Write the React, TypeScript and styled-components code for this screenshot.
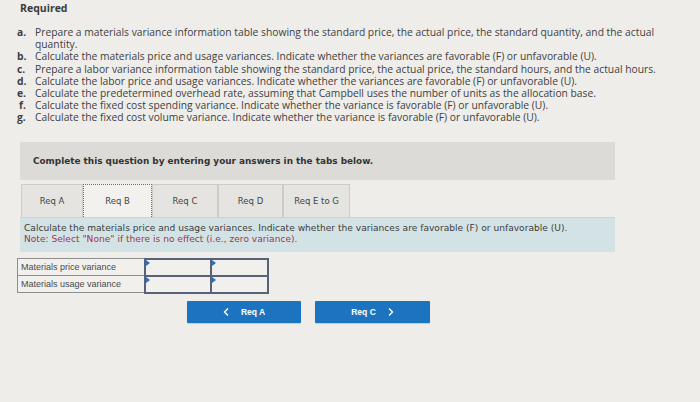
import React from 'react';
import styled, { createGlobalStyle } from 'styled-components';

const GlobalStyle = createGlobalStyle`
  html, body {
    margin: 0;
    padding: 0;
    background: #eeedea;
  }
  * {
    box-sizing: border-box;
  }
`;

const Page = styled.div`
  width: 700px;
  height: 402px;
  padding: 2px 0 0 17px;
  background: #eeedea;
  overflow: hidden;
`;

const Heading = styled.h4`
  margin: 0 0 0 3px;
  font-family: 'Open Sans', 'Liberation Sans', sans-serif;
  font-weight: 700;
  font-size: 10.5px;
  line-height: 13px;
  color: #3b3b3b;
`;

const ReqList = styled.ol`
  list-style: none;
  margin: 11px 0 0 0;
  padding: 0;
  width: 665px;
  font-family: 'Open Sans', 'Liberation Sans', sans-serif;
  font-size: 10.3px;
  line-height: 12.2px;
  color: #3f3f3f;
`;

const ReqItem = styled.li`
  display: grid;
  grid-template-columns: 18px 1fr;
`;

const Marker = styled.span<{ indent?: number }>`
  font-weight: 700;
  padding-left: ${(p) => p.indent ?? 0}px;
`;

const Banner = styled.div`
  margin: 18px 0 0 3px;
  width: 595px;
  height: 38px;
  background: #dcdbd7;
  display: flex;
  align-items: center;
  padding-left: 13px;
  font-family: 'DejaVu Sans', Verdana, sans-serif;
  font-weight: 700;
  font-size: 8.9px;
  color: #333;
`;

const TabRow = styled.div`
  display: flex;
  margin: 4px 0 0 4px;
`;

const Tab = styled.div<{ w: number; active?: boolean }>`
  width: ${(p) => p.w}px;
  height: 33px;
  display: flex;
  align-items: center;
  justify-content: center;
  background: ${(p) => (p.active ? '#f2f1ee' : '#e5e4e1')};
  border: ${(p) => (p.active ? '1px dotted #6d6d6d' : '1px solid #cdccc8')};
  border-bottom: none;
  font-family: 'DejaVu Sans', Verdana, sans-serif;
  font-size: 8.5px;
  color: #444;
`;

const Instructions = styled.div`
  margin-left: 3px;
  width: 595px;
  height: 35px;
  background: #d3e3e5;
  border-top: 1px solid #c4d4d7;
  padding: 5px 0 0 4px;
  font-family: 'DejaVu Sans', Verdana, sans-serif;
  font-size: 9.1px;
  line-height: 11px;
  color: #3c3c3c;
`;

const Note = styled.div`
  color: #a2354a;
`;

const AnswerTable = styled.table`
  margin-top: 6px;
  border-collapse: collapse;
  font-family: 'Liberation Sans', Arial, sans-serif;
  font-size: 9px;
  color: #4a4a4a;
`;

const LabelCell = styled.td`
  width: 127px;
  height: 17px;
  padding: 0 0 0 3px;
  border: 1px solid #8e8e8e;
  background: #f1f0ed;
`;

const InputCell = styled.td<{ w: number }>`
  position: relative;
  width: ${(p) => p.w}px;
  height: 17px;
  padding: 0;
  border: 2px solid #57617a;
  background: #f1f0ed;

  &::before {
    content: '';
    position: absolute;
    left: 0;
    top: 0;
    border-top: 3px solid transparent;
    border-bottom: 3px solid transparent;
    border-left: 4px solid #2f6fb5;
  }
`;

const NavRow = styled.div`
  display: flex;
  gap: 14px;
  margin: 7px 0 0 170px;
`;

const NavButton = styled.button<{ w: number }>`
  width: ${(p) => p.w}px;
  height: 22px;
  border: none;
  border-radius: 1px;
  background: #1c73c0;
  color: #fff;
  display: flex;
  align-items: center;
  justify-content: center;
  gap: 12px;
  font-family: 'Liberation Sans', Arial, sans-serif;
  font-weight: 700;
  font-size: 8.5px;
  padding: 0;
  box-shadow: 0 1px 1px rgba(0, 0, 0, 0.15);
`;

const Chevron = styled.svg`
  width: 6px;
  height: 8px;
`;

const requirements = [
  ['a.', 'Prepare a materials variance information table showing the standard price, the actual price, the standard quantity, and the actual quantity.'],
  ['b.', 'Calculate the materials price and usage variances. Indicate whether the variances are favorable (F) or unfavorable (U).'],
  ['c.', 'Prepare a labor variance information table showing the standard price, the actual price, the standard hours, and the actual hours.'],
  ['d.', 'Calculate the labor price and usage variances. Indicate whether the variances are favorable (F) or unfavorable (U).'],
  ['e.', 'Calculate the predetermined overhead rate, assuming that Campbell uses the number of units as the allocation base.'],
  ['f.', 'Calculate the fixed cost spending variance. Indicate whether the variance is favorable (F) or unfavorable (U).'],
  ['g.', 'Calculate the fixed cost volume variance. Indicate whether the variance is favorable (F) or unfavorable (U).'],
];

const tabs = [
  { label: 'Req A', w: 62 },
  { label: 'Req B', w: 69, active: true },
  { label: 'Req C', w: 66 },
  { label: 'Req D', w: 65 },
  { label: 'Req E to G', w: 67 },
];

const rows = ['Materials price variance', 'Materials usage variance'];

const App: React.FC = () => {
  return (
    <Page>
      <GlobalStyle />
      <Heading>Required</Heading>
      <ReqList>
        {requirements.map(([m, text]) => (
          <ReqItem key={m}>
            <Marker indent={m === 'f.' ? 2 : 0}>{m}</Marker>
            <span>{text}</span>
          </ReqItem>
        ))}
      </ReqList>

      <Banner>Complete this question by entering your answers in the tabs below.</Banner>

      <TabRow>
        {tabs.map((t) => (
          <Tab key={t.label} w={t.w} active={t.active}>
            {t.label}
          </Tab>
        ))}
      </TabRow>

      <Instructions>
        <div>
          Calculate the materials price and usage variances. Indicate whether the variances are favorable (F) or
          unfavorable (U).
        </div>
        <Note>Note: Select "None" if there is no effect (i.e., zero variance).</Note>
      </Instructions>

      <AnswerTable>
        <tbody>
          {rows.map((r) => (
            <tr key={r}>
              <LabelCell>{r}</LabelCell>
              <InputCell w={66} />
              <InputCell w={57} />
            </tr>
          ))}
        </tbody>
      </AnswerTable>

      <NavRow>
        <NavButton w={114}>
          <Chevron viewBox="0 0 6 8">
            <path d="M5 0.5 L1.5 4 L5 7.5" fill="none" stroke="#fff" strokeWidth="1.4" />
          </Chevron>
          Req A
        </NavButton>
        <NavButton w={115}>
          Req C
          <Chevron viewBox="0 0 6 8">
            <path d="M1 0.5 L4.5 4 L1 7.5" fill="none" stroke="#fff" strokeWidth="1.4" />
          </Chevron>
        </NavButton>
      </NavRow>
    </Page>
  );
};

export default App;
